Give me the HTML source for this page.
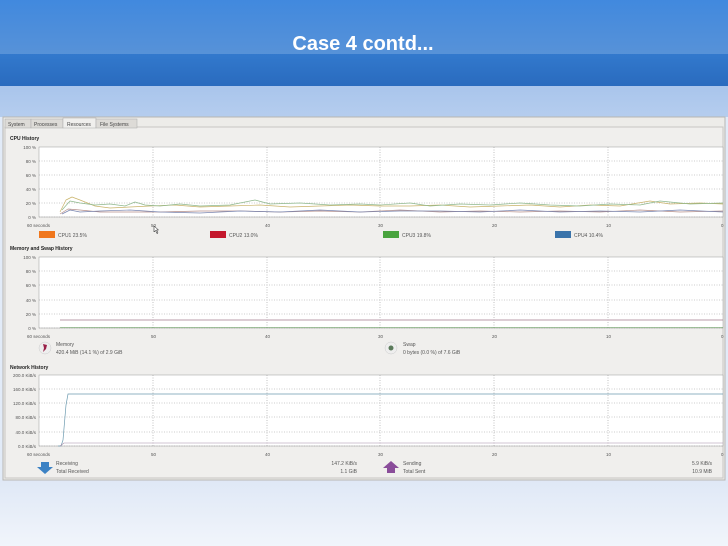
<!DOCTYPE html>
<html><head><meta charset="utf-8"><style>
body{margin:0;width:728px;height:546px;overflow:hidden;font-family:"Liberation Sans",sans-serif;background:linear-gradient(#e2ebf8 480px,#f3f6fb 546px)}
.b1{position:absolute;left:0;top:0;width:728px;height:54px;background:linear-gradient(#4189de,#5792d8)}
.b2{position:absolute;left:0;top:54px;width:728px;height:32px;background:linear-gradient(#3279cd,#2a6bbe)}
.b3{position:absolute;left:0;top:86px;width:728px;height:31px;background:linear-gradient(#a9c5ec,#b5cdee)}
h1{position:absolute;left:0;width:728px;top:33px;margin:0;text-align:center;font-size:20px;color:#fff;font-weight:bold}
svg{position:absolute;left:0;top:0}
text{font-family:"Liberation Sans",sans-serif}
</style></head><body>
<div class="b1"></div><div class="b2"></div><div class="b3"></div>
<h1 style="left:-1px">Case 4 contd...</h1>
<div style="position:absolute;left:0;top:480px;width:728px;height:66px;background:linear-gradient(#dfe8f6,#f1f5fb)"></div>
<svg width="728" height="546" viewBox="0 0 728 546">
<rect x="3" y="117" width="722" height="363" fill="#edece9" stroke="#b8b6b2"/>
<rect x="5" y="127" width="718" height="351" fill="#f0efed" stroke="#c8c6c2"/>
<g font-size="5" fill="#444">
<rect x="5" y="119" width="26" height="9" fill="#dddbd7" stroke="#aaa" stroke-width=".5"/><text x="8" y="126">System</text>
<rect x="31" y="119" width="32" height="9" fill="#dddbd7" stroke="#aaa" stroke-width=".5"/><text x="34" y="126">Processes</text>
<rect x="63" y="118" width="33" height="10" fill="#f0efed" stroke="#aaa" stroke-width=".5"/><text x="67" y="126">Resources</text>
<rect x="96" y="119" width="41" height="9" fill="#dddbd7" stroke="#aaa" stroke-width=".5"/><text x="100" y="126">File Systems</text>
</g>
<g font-size="5" fill="#222" font-weight="bold">
<text x="10" y="140">CPU History</text>
<text x="10" y="250">Memory and Swap History</text>
<text x="10" y="369">Network History</text>
</g>
<g fill="#fff" stroke="#999" stroke-width=".5">
<rect x="39" y="147" width="684" height="70"/>
<rect x="39" y="257" width="684" height="71"/>
<rect x="39" y="375" width="684" height="71"/>
</g>
<g stroke="#999" stroke-width=".6" stroke-dasharray="1,1.5" fill="none">
<path d="M39 161H723M39 175H723M39 189H723M39 203H723M39 217H723"/>
<path d="M39 271H723M39 285H723M39 300H723M39 314H723M39 328H723"/>
<path d="M39 389H723M39 403H723M39 417H723M39 432H723M39 446H723"/>
<path d="M153 147V217M267 147V217M380 147V217M494 147V217M608 147V217"/>
<path d="M153 257V328M267 257V328M380 257V328M494 257V328M608 257V328"/>
<path d="M153 375V446M267 375V446M380 375V446M494 375V446M608 375V446"/>
</g>
<g font-size="4.5" fill="#555" text-anchor="end">
<text x="36" y="149">100 %</text><text x="36" y="163">80 %</text><text x="36" y="177">60 %</text><text x="36" y="191">40 %</text><text x="36" y="205">20 %</text><text x="36" y="219">0 %</text>
<text x="36" y="259">100 %</text><text x="36" y="273">80 %</text><text x="36" y="287">60 %</text><text x="36" y="302">40 %</text><text x="36" y="316">20 %</text><text x="36" y="330">0 %</text>
<text x="36" y="377">200.0 KiB/s</text><text x="36" y="391">160.0 KiB/s</text><text x="36" y="405">120.0 KiB/s</text><text x="36" y="419">80.0 KiB/s</text><text x="36" y="434">40.0 KiB/s</text><text x="36" y="448">0.0 KiB/s</text>
</g>
<g font-size="4.5" fill="#555">
<text x="27" y="227">60 seconds</text><text x="151" y="227">50</text><text x="265" y="227">40</text><text x="378" y="227">30</text><text x="492" y="227">20</text><text x="606" y="227">10</text><text x="721" y="227">0</text>
<text x="27" y="338">60 seconds</text><text x="151" y="338">50</text><text x="265" y="338">40</text><text x="378" y="338">30</text><text x="492" y="338">20</text><text x="606" y="338">10</text><text x="721" y="338">0</text>
<text x="27" y="456">60 seconds</text><text x="151" y="456">50</text><text x="265" y="456">40</text><text x="378" y="456">30</text><text x="492" y="456">20</text><text x="606" y="456">10</text><text x="721" y="456">0</text>
</g>
<g fill="none" stroke-width=".7" stroke-linejoin="round">
<polyline stroke="#c9b36a" points="60,212 66,200 72,197 80,200 95,206 110,208 130,207 150,206 175,205 200,207 230,206 260,205 290,207 320,206 350,205 380,206 410,206 440,205 470,207 500,206 530,205 560,207 590,205 620,206 650,201 670,204 700,203 723,204"/>
<polyline stroke="#8fb88c" points="62,210 70,201 80,203 95,205 110,204 125,206 135,202 145,205 160,206 180,204 200,206 230,205 255,200 270,204 300,203 330,205 360,204 380,205 410,203 430,206 460,204 490,205 520,203 550,205 580,206 610,204 640,205 660,201 690,204 723,203"/>
<polyline stroke="#b58f8a" points="60,214 68,209 80,210 100,212 130,212 160,212 200,211 240,211 280,212 320,211 360,212 400,210 440,212 480,211 520,212 560,211 600,212 640,210 680,212 723,211"/>
<polyline stroke="#7a86b0" points="62,214 70,210 80,212 100,211 130,210 160,212 200,213 240,211 280,212 320,210 360,212 400,211 440,211 480,212 520,210 560,212 600,211 640,212 680,210 723,212"/>
</g>
<path d="M60 320H723" stroke="#a07a8e" stroke-width=".8"/>
<path d="M60 327.5H723" stroke="#5a9a50" stroke-width=".6"/>
<polyline points="58,446 61,446 63,440 66,405 68,394 723,394" stroke="#6d9bb0" fill="none" stroke-width=".7"/>
<polyline points="60,446 64,443 723,443" stroke="#a58aa8" fill="none" stroke-width=".6"/>
<g font-size="5" fill="#555">
<rect x="39" y="231" width="16" height="7" fill="#f0771d"/><text x="58" y="237">CPU1  23.5%</text>
<rect x="210" y="231" width="16" height="7" fill="#c4172c"/><text x="229" y="237">CPU2  13.0%</text>
<rect x="383" y="231" width="16" height="7" fill="#49a33e"/><text x="402" y="237">CPU3  19.8%</text>
<rect x="555" y="231" width="16" height="7" fill="#3a73aa"/><text x="574" y="237">CPU4  10.4%</text>
<circle cx="45" cy="348" r="6" fill="#eee" stroke="#ccc" stroke-width=".5"/><path d="M43 344l4 1-1 4-3 3 1-4z" fill="#9a2149"/><text x="56" y="346">Memory</text><text x="56" y="354">420.4 MiB (14.1 %) of 2.9 GiB</text>
<circle cx="391" cy="348" r="6" fill="#eee" stroke="#ccc" stroke-width=".5"/><circle cx="391" cy="348" r="2.5" fill="#5a7a5a"/><text x="403" y="346">Swap</text><text x="403" y="354">0 bytes (0.0 %) of 7.6 GiB</text>
<path d="M41 462h8v5h4l-8 7-8-7h4z" fill="#3c82c4"/><text x="56" y="465">Receiving</text><text x="56" y="473">Total Received</text>
<text x="357" y="465" text-anchor="end">147.2 KiB/s</text><text x="357" y="473" text-anchor="end">1.1 GiB</text>
<path d="M391 461l8 7h-4v5h-8v-5h-4z" fill="#8a4d9a"/><text x="403" y="465">Sending</text><text x="403" y="473">Total Sent</text>
<text x="712" y="465" text-anchor="end">5.9 KiB/s</text><text x="712" y="473" text-anchor="end">10.9 MiB</text>
</g>
<path d="M154 226v6l1.5-1.5 1.5 3 1-.5-1.5-3h2z" fill="#fff" stroke="#000" stroke-width=".5"/>
</svg>
</body></html>
